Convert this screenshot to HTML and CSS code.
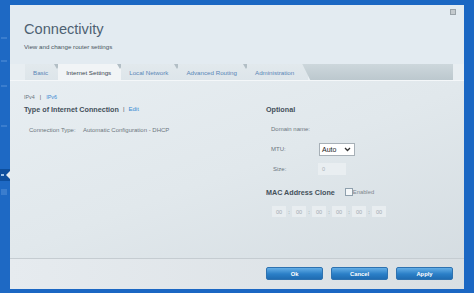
FILE: index.html
```html
<!DOCTYPE html>
<html>
<head>
<meta name="viewport" content="width=device-width, initial-scale=1.0"/>
<link rel="stylesheet" href="styles.css">
</head>
<body>
<div class="screen">
	<div class="sidebar">
		<div class="mark m1"></div>
		<div class="mark m2"></div>
		<div class="mark m3"></div>
		<div class="mark m4"></div>
		<div class="active-item"><span class="dot"></span><span class="pointer"></span></div>
		<div class="mark m5"></div>
	</div>
	<div class="panel">
		<span class="close"></span>
		<div class="header">
			<h1 class="title">Connectivity</h1>
			<p class="subtitle">View and change router settings</p>
		</div>
		<div class="tabs">
			<div class="tab">Basic</div>
			<div class="tab active">Internet Settings</div>
			<div class="tab">Local Network</div>
			<div class="tab">Advanced Routing</div>
			<div class="tab last">Administration</div>
			<div class="tab-fill"></div>
		</div>
		<div class="content">
			<div class="col left">
				<div class="proto"><span>IPv4</span><span class="sep">|</span><span class="link">IPv6</span></div>
				<div class="heading">Type of Internet Connection <span class="sep">|</span> <span class="link">Edit</span></div>
				<div class="row"><span class="label wide">Connection Type:</span><span class="value">Automatic Configuration - DHCP</span></div>
			</div>
			<div class="col right">
				<div class="heading">Optional</div>
				<div class="row first"><span class="label">Domain name:</span></div>
				<div class="row"><span class="label">MTU:</span><span class="select">Auto<svg width="7" height="5" viewBox="0 0 7 5"><path d="M1 1 L3.5 3.5 L6 1" fill="none" stroke="#333" stroke-width="1.3"/></svg></span></div>
				<div class="row"><span class="label size">Size:</span><span class="input">0</span></div>
				<div class="heading mac">MAC Address Clone <span class="check"></span><span class="enabled">Enabled</span></div>
				<div class="mac-fields">
					<span class="octet">00</span><span class="colon">:</span>
					<span class="octet">00</span><span class="colon">:</span>
					<span class="octet">00</span><span class="colon">:</span>
					<span class="octet">00</span><span class="colon">:</span>
					<span class="octet">00</span><span class="colon">:</span>
					<span class="octet">00</span>
				</div>
			</div>
		</div>
		<div class="footer">
			<button class="btn">Ok</button>
			<button class="btn">Cancel</button>
			<button class="btn">Apply</button>
		</div>
	</div>
</div>
</body>
</html>
```

FILE: styles.css
```css
body {
	margin: 0;
	background-color: #1b67c3;
	font-family: "Liberation Sans", Arial, sans-serif;
	overflow: hidden;
}

.screen {
	display: flex;
	width: 474px;
	height: 293px;
}

.sidebar {
	position: relative;
	width: 10px;
	background-color: #1e69c4;
}

.mark {
	height: 2px;
	width: 6px;
	margin-left: 1px;
	background-color: #4c8ad6;
	opacity: 0.6;
}
.m1 { margin-top: 37px; }
.m2 { margin-top: 21px; }
.m3 { margin-top: 23px; }
.m4 { margin-top: 38px; }
.m5 { margin-top: 8px; height: 6px; }

.active-item {
	position: relative;
	margin-top: 42px;
	height: 12px;
	background-color: #0e4f9e;
}

.dot {
	position: absolute;
	left: 1px;
	top: 5px;
	width: 3px;
	height: 2px;
	background-color: #9cc2ea;
}

.pointer {
	position: absolute;
	right: 0;
	top: 2px;
	border-top: 4px solid transparent;
	border-bottom: 4px solid transparent;
	border-right: 4px solid #e6edf2;
}

.panel {
	position: relative;
	display: flex;
	flex-direction: column;
	width: 454px;
	height: 284px;
	margin-top: 5px;
	background: linear-gradient(160deg, #eaf0f4 0%, #e1e8ec 55%, #d3dbe0 100%);
	color: #5b6670;
}

.close {
	position: absolute;
	right: 8px;
	top: 4px;
	width: 4px;
	height: 4px;
	border: 1px solid #9aa3a9;
	background-color: #c4cace;
}

.header {
	height: 59px;
	padding-left: 14px;
	box-sizing: border-box;
	padding-top: 15px;
	background-color: #e3ebf1;
}

.title {
	margin: 0;
	font-size: 14.6px;
	font-weight: normal;
	color: #4e6172;
	line-height: 18px;
}

.subtitle {
	margin: 5px 0 0 0;
	font-size: 6.2px;
	color: #4a5560;
}

.tabs {
	display: flex;
	height: 16px;
	padding-left: 15px;
	padding-right: 11px;
	background-color: #e8eef2;
	border-bottom: 1px solid #f4f7f9;
}

.tab {
	position: relative;
	display: flex;
	align-items: center;
	padding: 0 10px 0 8px;
	font-size: 6.2px;
	color: #5a86b6;
	background: linear-gradient(#e2e9ed, #dde5ea);
}

.tab:after {
	content: "";
	position: absolute;
	right: -2px;
	top: 0;
	border-left: 3px solid transparent;
	border-right: 3px solid transparent;
	border-top: 5px solid #b2bec5;
}

.tab.active {
	color: #3b4650;
	background: #f1f4f6;
}

.tab.last:after {
	display: none;
}

.tab.last {
	padding-right: 14px;
}

.tab-fill {
	flex: 1;
	margin-left: -6px;
	background: linear-gradient(#cdd7dc, #bcc8ce);
	clip-path: polygon(0 0, 100% 0, 100% 100%, 8px 100%);
}

.content {
	flex: 1;
	display: flex;
	padding-top: 11px;
}

.col {
	display: flex;
	flex-direction: column;
}

.col.left {
	width: 242px;
	padding-left: 14px;
}

.proto {
	display: flex;
	gap: 5px;
	height: 10px;
	align-items: center;
	font-size: 5.4px;
	color: #6a747c;
}

.link {
	color: #3a8ad2;
}

.sep {
	color: #555;
}

.heading {
	display: flex;
	align-items: center;
	gap: 4px;
	height: 14px;
	font-size: 7.2px;
	font-weight: bold;
	color: #44505a;
}

.heading .link, .heading .sep {
	font-weight: normal;
	font-size: 6px;
}

.col.right .heading {
	margin-top: 10px;
}

.row {
	display: flex;
	align-items: center;
	height: 20px;
	font-size: 6px;
	color: #6c767e;
}

.col.left .row {
	margin-top: 4px;
	padding-left: 5px;
}

.col.right .row {
	padding-left: 5px;
}

.col.right .row.first {
	margin-top: 3px;
}

.label {
	width: 48px;
}

.label.wide {
	width: 54px;
}

.label.size {
	padding-left: 2px;
	width: 45px;
}

.select {
	display: flex;
	align-items: center;
	justify-content: space-between;
	width: 36px;
	height: 13px;
	padding: 0 3px 0 2px;
	box-sizing: border-box;
	background-color: #fff;
	border: 1px solid #a7b0b7;
	font-size: 7px;
	color: #222;
}

.input {
	display: flex;
	align-items: center;
	width: 28px;
	height: 12px;
	padding-left: 4px;
	box-sizing: border-box;
	background-color: #e9eef1;
	color: #aab2b8;
	font-size: 5.6px;
}

.col.right .heading.mac {
	margin-top: 4px;
	height: 18px;
}

.check {
	width: 6px;
	height: 6px;
	margin-left: 6px;
	background-color: #f4f7f9;
	border: 1px solid #8fa0ad;
}

.enabled {
	margin-left: -4px;
	font-size: 5.8px;
	font-weight: normal;
	color: #7c868d;
}

.mac-fields {
	display: flex;
	align-items: center;
	margin-top: 5px;
	padding-left: 6px;
	font-size: 5.6px;
	color: #a4acb2;
}

.octet {
	display: flex;
	align-items: center;
	justify-content: center;
	width: 14px;
	height: 11px;
	background-color: #e8edf0;
}

.colon {
	width: 6px;
	text-align: center;
	color: #6e787f;
}

.footer {
	display: flex;
	justify-content: flex-end;
	gap: 8px;
	height: 31px;
	padding: 8px 11px 0 0;
	box-sizing: border-box;
	border-top: 1px solid #c5ccd1;
	background: linear-gradient(90deg, #e6ebef, #d9dfe3);
}

.btn {
	width: 57px;
	height: 13px;
	padding: 0;
	border: 1px solid #2e72b0;
	border-radius: 2px;
	background: linear-gradient(#64aee6, #2b7fc7 55%, #1f6cb2);
	color: #fff;
	font-family: "Liberation Sans", Arial, sans-serif;
	font-size: 5.8px;
	font-weight: bold;
}
```
